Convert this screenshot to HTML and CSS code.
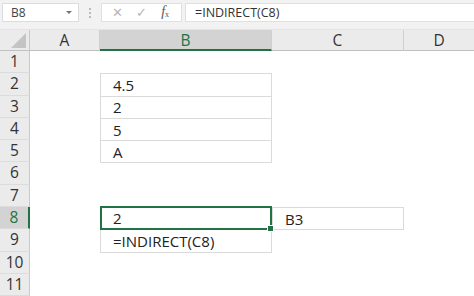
FILE: index.html
```html
<!DOCTYPE html>
<html lang="en">
<head>
    <meta charset="UTF-8">
    <title>INDIRECT</title>
    <link rel="stylesheet" href="styles.css">
</head>
<body>
    <div class="toolbar">
        <div class="namebox">
            <span>B8</span>
            <span class="arrow"></span>
        </div>
        <div class="dots"><i></i><i></i><i></i></div>
        <div class="buttons">
            <span class="btn cancel">&#x2715;</span>
            <span class="btn enter">&#x2713;</span>
            <span class="btn fx"><i>f</i><sub>x</sub></span>
        </div>
        <div class="formula">=INDIRECT(C8)</div>
    </div>

    <div class="sheet">
        <!-- column headers -->
        <div class="corner"><span class="tri"></span></div>
        <div class="colhead">A</div>
        <div class="colhead selected">B</div>
        <div class="colhead">C</div>
        <div class="colhead last">D</div>

        <div class="rowhead">1</div><div></div><div></div><div></div><div></div>
        <div class="rowhead">2</div><div></div><div class="cell box">4.5</div><div></div><div></div>
        <div class="rowhead">3</div><div></div><div class="cell box">2</div><div></div><div></div>
        <div class="rowhead">4</div><div></div><div class="cell box">5</div><div></div><div></div>
        <div class="rowhead">5</div><div></div><div class="cell box">A</div><div></div><div></div>
        <div class="rowhead">6</div><div></div><div></div><div></div><div></div>
        <div class="rowhead">7</div><div></div><div></div><div></div><div></div>
        <div class="rowhead selected">8</div><div></div><div class="cell active">2<span class="handle"></span></div><div class="cell box">B3</div><div></div>
        <div class="rowhead">9</div><div></div><div class="cell box">=INDIRECT(C8)</div><div></div><div></div>
        <div class="rowhead">10</div><div></div><div></div><div></div><div></div>
        <div class="rowhead">11</div><div></div><div></div><div></div><div></div>
    </div>
</body>
</html>
```

FILE: styles.css
```css
body {
    margin: 0;
    width: 474px;
    height: 296px;
    overflow: hidden;
    font-family: "Open Sans", "Noto Sans", sans-serif;
    background-color: white;
    color: #222;
}
.toolbar {
    display: flex;
    align-items: flex-start;
    height: 30px;
    padding-top: 3px;
    box-sizing: border-box;
    background-color: #f2f2f2;
    border-bottom: 1px solid #e4e4e4;
}
.namebox {
    width: 77px;
    height: 19px;
    margin-left: 2px;
    box-sizing: border-box;
    background-color: white;
    border: 1px solid #dcdcdc;
    display: flex;
    align-items: center;
    justify-content: space-between;
    padding: 0 6px 0 8px;
    font-size: 12px;
    color: #444;
}
.arrow {
    border-left: 3px solid transparent;
    border-right: 3px solid transparent;
    border-top: 3px solid #777;
}
.dots {
    width: 22px;
    height: 19px;
    display: flex;
    flex-direction: column;
    align-items: center;
    justify-content: center;
    gap: 2px;
}
.dots i {
    width: 2px;
    height: 2px;
    background-color: #bbb;
}
.buttons {
    width: 81px;
    height: 19px;
    box-sizing: border-box;
    background-color: white;
    border: 1px solid #e0e0e0;
    display: flex;
    align-items: center;
    justify-content: space-around;
    padding: 0 4px;
}
.btn {
    font-size: 13px;
    line-height: 17px;
    color: #b5b5b5;
    width: 20px;
    text-align: center;
}
.fx {
    color: #555;
    font-family: "Liberation Serif", serif;
    font-size: 14px;
}
.fx sub {
    font-size: 8px;
    vertical-align: -1px;
}
.formula {
    flex: 1;
    height: 19px;
    margin-left: 3px;
    box-sizing: border-box;
    background-color: white;
    border: 1px solid #e0e0e0;
    border-right: none;
    padding-left: 9px;
    font-size: 12.5px;
    line-height: 17px;
    color: #333;
}
.sheet {
    display: grid;
    grid-template-columns: 30px 70px 172px 132px 70px;
    grid-template-rows: 21px repeat(11, 22.3px);
}
.corner {
    background-color: #ebebeb;
    border-right: 1px solid #c9c9c9;
    border-bottom: 1px solid #c0c0c0;
    display: flex;
    align-items: flex-end;
    justify-content: flex-end;
    padding: 0 3px 2px 0;
}
.tri {
    width: 0;
    height: 0;
    border-left: 15px solid transparent;
    border-bottom: 15px solid #c4c4c4;
}
.colhead {
    background-color: #ebebeb;
    border-right: 1px solid #cfcfcf;
    border-bottom: 1px solid #c0c0c0;
    text-align: center;
    font-size: 15.5px;
    line-height: 21px;
    color: #333;
}
.colhead.last {
    border-right: none;
}
.colhead.selected {
    background-color: #d3d3d3;
    color: #217346;
    border-bottom: 2px solid #217346;
    line-height: 20px;
}
.rowhead {
    background-color: #ebebeb;
    border-right: 1px solid #c9c9c9;
    border-bottom: 1px solid #dcdcdc;
    text-align: center;
    font-size: 15.5px;
    line-height: 21px;
    color: #333;
}
.rowhead.selected {
    background-color: #d3d3d3;
    color: #217346;
    border-right: 2px solid #217346;
}
.cell {
    position: relative;
    font-size: 15px;
    padding-left: 12px;
    display: flex;
    align-items: center;
    box-sizing: border-box;
}
.box {
    border: 1px solid #dadada;
    margin-bottom: -1px;
}
.active {
    border: 2px solid #217346;
    padding-left: 11px;
    margin: -1px 0 -1px 0;
    z-index: 1;
}
.handle {
    position: absolute;
    right: -4px;
    bottom: -4px;
    width: 5px;
    height: 5px;
    background-color: #217346;
    border: 1px solid white;
}
```
